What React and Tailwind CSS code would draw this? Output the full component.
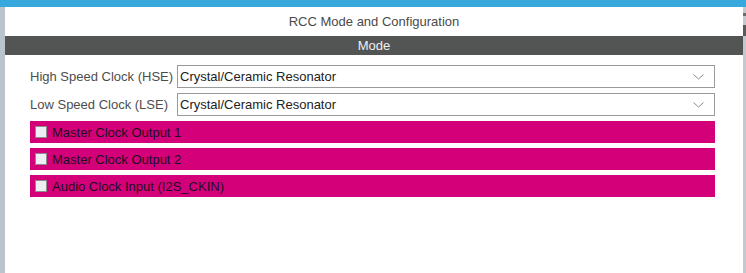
import React from 'react';

const font = { fontFamily: '"Liberation Sans", Arial, sans-serif' };

function SelectRow({ label, value }) {
  return (
    <div className="flex items-center h-[23px]">
      <span className="w-[147px] shrink-0 text-[13px] text-[#4d4d4d] leading-none">{label}</span>
      <div className="flex-1 h-[23px] border border-[#9a9a9a] bg-white flex items-center justify-between pl-[2px] pr-[10px]">
        <span className="text-[13px] text-[#222] leading-none">{value}</span>
        <svg width="11" height="6" viewBox="0 0 11 6" className="text-[#8a8a8a]">
          <path d="M0.5 0.5 L5.5 5 L10.5 0.5" fill="none" stroke="currentColor" strokeWidth="1" />
        </svg>
      </div>
    </div>
  );
}

function PinRow({ label }) {
  return (
    <div className="h-[22px] bg-[#d4007a] flex items-center pl-[5px]">
      <span className="w-[12px] h-[12px] border border-[#8c8c8c] bg-[#eeeff2] shrink-0" />
      <span className="ml-[5px] text-[13px] text-[#1a0f1f] leading-none">{label}</span>
    </div>
  );
}

export default function App() {
  return (
    <div className="w-[746px] h-[273px] bg-white flex flex-col overflow-hidden" style={font}>
      <div className="h-[7px] bg-[#38a9dc] shrink-0" />
      <div className="flex flex-1 min-h-0">
        <div className="w-[5px] bg-[#b9c4cb] shrink-0" />
        <div className="flex-1 flex flex-col">
          <div className="h-[29px] flex items-center justify-center text-[13px] text-[#4a4a4a]">
            RCC Mode and Configuration
          </div>
          <div className="h-[19px] bg-[#535454] flex items-center justify-center text-[13px] text-[#f0f0f0]">
            Mode
          </div>
          <div className="flex flex-col pl-[25px] pr-[28px] pt-[10px] gap-[5px]">
            <SelectRow label="High Speed Clock (HSE)" value="Crystal/Ceramic Resonator" />
            <SelectRow label="Low Speed Clock (LSE)" value="Crystal/Ceramic Resonator" />
            <PinRow label="Master Clock Output 1" />
            <PinRow label="Master Clock Output 2" />
            <PinRow label="Audio Clock Input (I2S_CKIN)" />
          </div>
        </div>
        <div className="w-[3px] bg-[#c2cacf] shrink-0 flex flex-col">
          <div className="h-[6px]" />
          <div className="h-[3px] bg-[#6b6b6b]" />
          <div className="h-[9px]" />
          <div className="h-[11px] bg-[#5a5a5a]" />
        </div>
      </div>
    </div>
  );
}
